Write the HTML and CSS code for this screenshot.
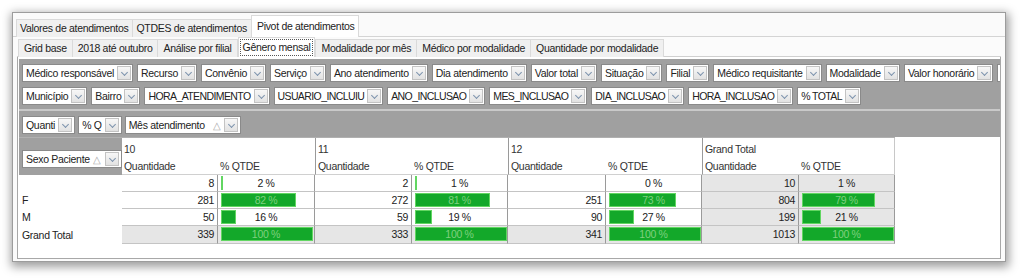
FILE: index.html
```html
<!DOCTYPE html>
<html lang="pt">
<head>
<meta charset="utf-8">
<link rel="stylesheet" href="styles.css">
</head>
<body>
<div class="window">
  <div class="tabs1">
    <div class="tab1">Valores de atendimentos</div>
    <div class="tab1">QTDES de atendimentos</div>
    <div class="tab1 active">Pivot de atendimentos</div>
  </div>
  <div class="page">
    <div class="tabs2">
      <div class="tab2">Grid base</div>
      <div class="tab2">2018 até outubro</div>
      <div class="tab2">Análise por filial</div>
      <div class="tab2 active"><span class="focus">Gênero mensal</span></div>
      <div class="tab2">Modalidade por mês</div>
      <div class="tab2">Médico por modalidade</div>
      <div class="tab2">Quantidade por modalidade</div>
    </div>
    <div class="pivot">
      <div class="filter-area">
        <div class="frow">
          <div class="fbtn"><span class="lbl">Médico responsável</span><span class="dd"></span></div>
          <div class="fbtn"><span class="lbl">Recurso</span><span class="dd"></span></div>
          <div class="fbtn"><span class="lbl">Convênio</span><span class="dd"></span></div>
          <div class="fbtn"><span class="lbl">Serviço</span><span class="dd"></span></div>
          <div class="fbtn"><span class="lbl">Ano atendimento</span><span class="dd"></span></div>
          <div class="fbtn"><span class="lbl">Dia atendimento</span><span class="dd"></span></div>
          <div class="fbtn"><span class="lbl">Valor total</span><span class="dd"></span></div>
          <div class="fbtn"><span class="lbl">Situação</span><span class="dd"></span></div>
          <div class="fbtn"><span class="lbl">Filial</span><span class="dd"></span></div>
          <div class="fbtn"><span class="lbl">Médico requisitante</span><span class="dd"></span></div>
          <div class="fbtn"><span class="lbl">Modalidade</span><span class="dd"></span></div>
          <div class="fbtn"><span class="lbl">Valor honorário</span><span class="dd"></span></div>
          <div class="fbtn"><span class="lbl">&nbsp;</span><span class="dd"></span></div>
        </div>
        <div class="frow">
          <div class="fbtn"><span class="lbl">Município</span><span class="dd"></span></div>
          <div class="fbtn"><span class="lbl">Bairro</span><span class="dd"></span></div>
          <div class="fbtn up"><span class="lbl">HORA_ATENDIMENTO</span><span class="dd"></span></div>
          <div class="fbtn up"><span class="lbl">USUARIO_INCLUIU</span><span class="dd"></span></div>
          <div class="fbtn up"><span class="lbl">ANO_INCLUSAO</span><span class="dd"></span></div>
          <div class="fbtn up"><span class="lbl">MES_INCLUSAO</span><span class="dd"></span></div>
          <div class="fbtn up"><span class="lbl">DIA_INCLUSAO</span><span class="dd"></span></div>
          <div class="fbtn up"><span class="lbl">HORA_INCLUSAO</span><span class="dd"></span></div>
          <div class="fbtn up"><span class="lbl">% TOTAL</span><span class="dd"></span></div>
        </div>
      </div>
      <div class="data-area">
        <div class="fbtn w-quant"><span class="lbl">Quanti</span><span class="dd"></span></div>
        <div class="fbtn w-pq"><span class="lbl">% Q</span><span class="dd"></span></div>
        <div class="fbtn"><span class="lbl">Mês atendimento</span><span class="sort">△</span><span class="dd"></span></div>
      </div>
      <div class="grid">
        <div class="corner">
          <div class="fbtn w-sexo"><span class="lbl">Sexo Paciente</span><span class="sort">△</span><span class="dd"></span></div>
        </div>
        <div class="mh first">10</div>
        <div class="mh">11</div>
        <div class="mh">12</div>
        <div class="mh last">Grand Total</div>
        <div class="sh first">Quantidade</div><div class="sh">% QTDE</div>
        <div class="sh sl">Quantidade</div><div class="sh">% QTDE</div>
        <div class="sh sl">Quantidade</div><div class="sh">% QTDE</div>
        <div class="sh sl">Quantidade</div><div class="sh last">% QTDE</div>

        <div class="rl"></div>
        <div class="c n top">8</div><div class="c p top"><span class="bar" style="width:2px"></span><span class="t">2 %</span></div>
        <div class="c n top">2</div><div class="c p top"><span class="bar" style="width:1px"></span><span class="t">1 %</span></div>
        <div class="c n top"></div><div class="c p top"><span class="t">0 %</span></div>
        <div class="c n top gt">10</div><div class="c p top gt"><span class="t">1 %</span></div>

        <div class="rl">F</div>
        <div class="c n">281</div><div class="c p"><span class="bar" style="width:75px"></span><span class="t lt">82 %</span></div>
        <div class="c n">272</div><div class="c p"><span class="bar" style="width:75px"></span><span class="t lt">81 %</span></div>
        <div class="c n">251</div><div class="c p"><span class="bar" style="width:67px"></span><span class="t lt">73 %</span></div>
        <div class="c n gt">804</div><div class="c p gt"><span class="bar" style="width:73px"></span><span class="t lt">79 %</span></div>

        <div class="rl">M</div>
        <div class="c n">50</div><div class="c p"><span class="bar" style="width:15px"></span><span class="t">16 %</span></div>
        <div class="c n">59</div><div class="c p"><span class="bar" style="width:17px"></span><span class="t">19 %</span></div>
        <div class="c n">90</div><div class="c p"><span class="bar" style="width:25px"></span><span class="t">27 %</span></div>
        <div class="c n gt">199</div><div class="c p gt"><span class="bar" style="width:19px"></span><span class="t">21 %</span></div>

        <div class="rl gtl">Grand Total</div>
        <div class="c n gt">339</div><div class="c p gt"><span class="bar" style="width:92px"></span><span class="t lt">100 %</span></div>
        <div class="c n gt">333</div><div class="c p gt"><span class="bar" style="width:92px"></span><span class="t lt">100 %</span></div>
        <div class="c n gt">341</div><div class="c p gt"><span class="bar" style="width:92px"></span><span class="t lt">100 %</span></div>
        <div class="c n gt">1013</div><div class="c p gt"><span class="bar" style="width:92px"></span><span class="t lt">100 %</span></div>
      </div>
    </div>
  </div>
</div>
</body>
</html>
```
FILE: styles.css
```css
* { box-sizing: border-box; }
html, body { margin: 0; padding: 0; background: #fff; }
body {
  width: 1024px; height: 280px; overflow: hidden;
  font-family: "Liberation Sans", Arial, sans-serif;
  font-size: 10.5px; letter-spacing: -0.3px; color: #222;
}
.window {
  margin: 12px 0 0 12px;
  width: 994px; height: 250px;
  border: 1px solid #9c9c9c;
  background: #fbfbfb;
  box-shadow: 1px 3px 9px 2px rgba(0,0,0,0.38);
  overflow: hidden;
}
.tabs1 {
  display: flex; align-items: flex-end;
  height: 24px; padding-left: 3px;
  border-bottom: 1px solid #d4d4d4;
  background: #fafafa;
}
.tab1 {
  height: 18px; line-height: 17px;
  padding: 0 4px 0 3px;
  background: #f0f0f0;
  border: 1px solid #dadada; border-bottom: none;
  margin-right: -1px; margin-bottom: -1px;
  white-space: nowrap; color: #222;
}
.tab1.active {
  height: 22px; line-height: 20px;
  background: #fff; position: relative; z-index: 1;
  padding: 0 3px 0 5px;
}
.page { padding: 0 4px 0 4px; }
.tabs2 {
  display: flex; align-items: flex-end;
  height: 20px; padding-left: 1px;
  border-bottom: 1px solid #d0d0d0;
}
.tab2 {
  height: 18px; line-height: 17px;
  padding: 0 5px;
  background: #f0f0f0;
  border: 1px solid #dadada; border-bottom: none;
  margin-right: -1px; margin-bottom: -1px;
  white-space: nowrap;
}
.tab2.active {
  height: 20px; background: #fff; padding: 1px 2px 0 2px;
  margin-right: 0; margin-left: 1px;
  position: relative; z-index: 1;
}
.focus {
  display: inline-block; line-height: 15px; padding: 0 2px;
  outline: 1px dotted #555;
}
.pivot {
  height: 202px;
  border: 1px solid #a8a8a8; border-top: none;
  background: #fff;
  padding: 2px 0 0 1px;
}
.filter-area {
  background: #a0a0a0;
  padding: 5px 3px 4px 3px;
  display: flex; flex-direction: column; gap: 5px;
  overflow: hidden;
}
.frow { display: flex; gap: 4px; white-space: nowrap; }
.fbtn {
  flex: none;
  display: flex; align-items: center;
  height: 18px;
  background: #fff;
  border: 1px solid #8a8a8a;
  padding: 0 2px 0 3px;
  color: #222;
}
.frow .fbtn { padding: 0 1px 0 3px; }
.fbtn.up { letter-spacing: -0.6px; }
.lbl { flex: none; white-space: nowrap; }
.sort { flex: none; color: #aaa; font-size: 10px; margin-left: 8px; }
.dd {
  flex: none;
  width: 14px; height: 14px; margin-left: 4px;
  border: 1px solid #c3c3c3;
  background: linear-gradient(#f7f7f7, #e2e2e2);
  position: relative;
}
.frow .dd { margin-left: 3px; }
.dd::after {
  content: ""; position: absolute;
  left: 4px; top: 3px; width: 4px; height: 4px;
  border-right: 1px solid #7d93ad; border-bottom: 1px solid #7d93ad;
  transform: rotate(45deg);
}
.data-area {
  background: #a0a0a0;
  border-top: 2px solid #c9c9c9;
  height: 28px;
  padding: 5px 3px 0 3px;
  display: flex; gap: 3px;
}
.w-quant .dd { margin-left: 3px; }
.w-pq .dd { margin-left: 3px; }
.w-sexo .sort { margin-left: 3px; }
.w-sexo .dd { margin-left: 4px; }

.grid {
  display: grid;
  width: 876px;
  grid-template-columns: 103px 96px 97px 97px 96px 98px 96px 97px 96px;
  grid-template-rows: 18px 19px 17px 17px 17px 18px;
  border-top: 1px solid #b0b0b0;
}
.corner {
  grid-row: 1 / 3; grid-column: 1;
  background: #a0a0a0;
  padding: 12px 0 0 3px;
}
.mh {
  grid-column: span 2;
  border-left: 1px solid #9a9a9a;
  padding: 4px 0 0 2px; line-height: 14px; color: #333;
}
.mh.first { border-left: none; }
.mh.last { border-right: 1px solid #c8c8c8; }
.sh { padding: 3px 0 0 2px; line-height: 14px; color: #333; border-bottom: 1px solid #d0d0d0; }
.sh.first { grid-column: 2; }
.sh.sl { border-left: 1px solid #9a9a9a; }
.sh.last { border-right: 1px solid #c8c8c8; }
.rl { grid-column: 1; padding-left: 3px; line-height: 17px; background: #fff; }
.rl.gtl { padding-top: 1px; }
.c {
  position: relative;
  border-right: 1px solid #9a9a9a;
  border-bottom: 1px solid #c4c4c4;
  line-height: 16px;
  background: #fff;
}
.n { text-align: right; padding-right: 3px; }
.p { text-align: center; }
.gt { background: #e6e6e6; }
.bar {
  position: absolute; left: 3px; top: 1px; height: 14px;
  background: #13a82a;
  border: 1px solid #62d662;
}
.t { position: relative; }
.t.lt { color: #7fd07f; }
```
